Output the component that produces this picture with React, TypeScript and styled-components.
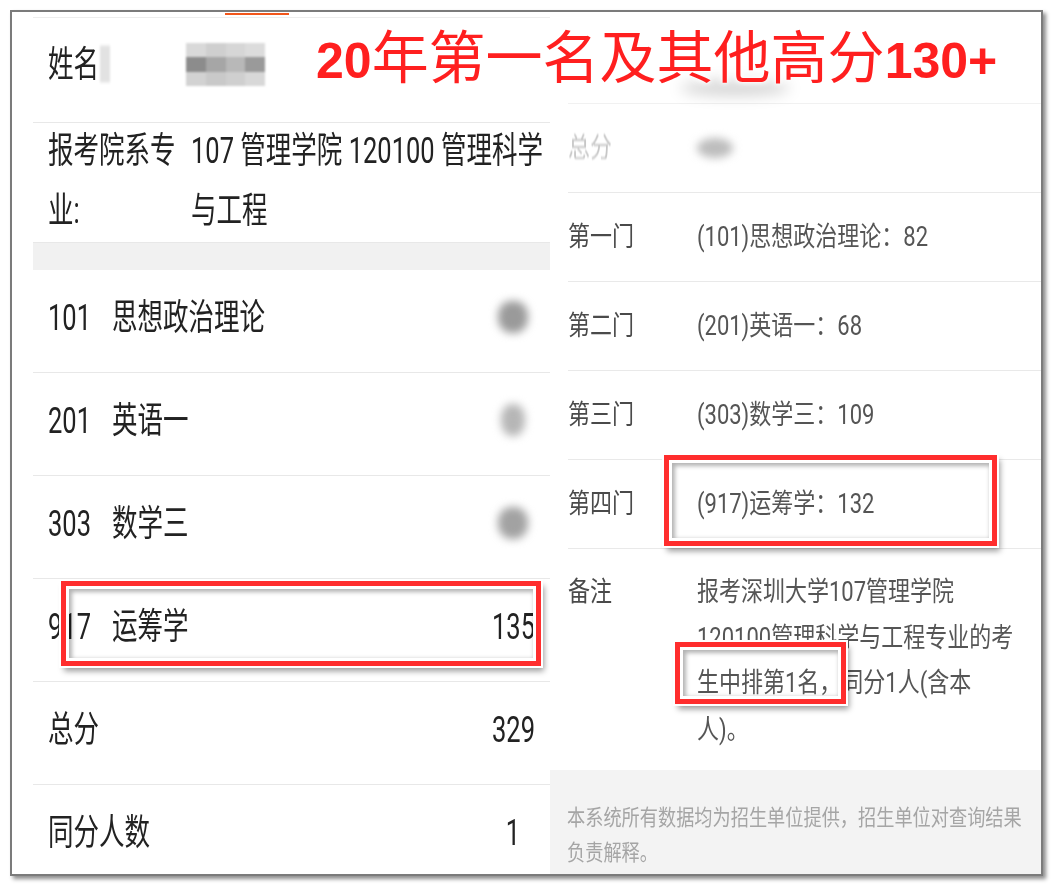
import React from "react"
import styled, { createGlobalStyle } from "styled-components"

const GlobalStyle = createGlobalStyle`
  html, body {
    margin: 0;
    padding: 0;
    background: #fff;
  }
  body {
    font-family: Roboto, "Noto Sans CJK SC", sans-serif;
  }
`

const Page = styled.div`
  position: relative;
  width: 1056px;
  height: 889px;
  padding: 10px 0 0 10px;
  box-sizing: border-box;
  overflow: hidden;
`

const Frame = styled.div`
  display: flex;
  width: 1033px;
  height: 866px;
  box-sizing: border-box;
  border: 2px solid #7b7b7b;
  box-shadow: 3px 3px 4px rgba(0, 0, 0, 0.45);
  background: #fff;
  overflow: hidden;
`

/* ---------- left screenshot ---------- */

const LeftPanel = styled.div`
  display: flex;
  flex-direction: column;
  width: 538px;
  flex-shrink: 0;
  padding-left: 21px;
  box-sizing: border-box;
  color: #222;
  font-size: 25.5px;
  overflow: hidden;
`

const TabBar = styled.div`
  height: 6px;
  flex-shrink: 0;
  padding-top: 1px;
  box-sizing: border-box;
  border-bottom: 1px solid #ededed;
`

const TabMark = styled.div`
  width: 64px;
  height: 2px;
  margin-left: 192px;
  background: #f2561a;
`

const LRow = styled.div<{ $h: number; $pb: number }>`
  position: relative;
  display: flex;
  align-items: center;
  flex-shrink: 0;
  height: ${p => p.$h}px;
  padding: 0 16px ${p => p.$pb}px 15px;
  box-sizing: border-box;
  border-bottom: 1px solid #e8e8e8;
`

const Band = styled.div`
  height: 27px;
  flex-shrink: 0;
  background: #f1f1f1;
`

const LText = styled.span`
  display: inline-block;
  flex-shrink: 0;
  line-height: 42px;
  white-space: nowrap;
  transform: scaleY(1.42);
`

const FieldName = styled(LText)`
  width: 141px;
  white-space: normal;
`

const FieldValue = styled(LText)`
  width: 364px;
  margin-left: 2px;
  white-space: normal;
`

const Code = styled(LText)`
  width: 64px;
`

const Score = styled(LText)`
  width: 42px;
  margin-left: auto;
  text-align: center;
`

const NameSmudge = styled.span`
  display: inline-block;
  width: 10px;
  height: 26px;
  margin-left: 1px;
  vertical-align: -4px;
  background: #e2e2e2;
  filter: blur(1px);
`

const Mosaic = styled.div`
  display: grid;
  grid-template-columns: repeat(4, 1fr);
  grid-template-rows: 14px 15px 14px;
  width: 79px;
  margin-left: -3px;
  filter: blur(1.3px);
`

const Cell = styled.div<{ $c: string }>`
  background: ${p => p.$c};
`

const Blob = styled.div<{ $tone: string; $w: number }>`
  width: ${p => p.$w}px;
  height: 32px;
  margin: 0 ${p => (42 - p.$w) / 2}px 0 auto;
  border-radius: 45%;
  background: ${p => p.$tone};
  filter: blur(4px);
`

/* ---------- right screenshot ---------- */

const RightPanel = styled.div`
  display: flex;
  flex-direction: column;
  flex: 1;
  min-width: 0;
  color: #555;
  font-size: 22px;
`

const RTop = styled.div`
  height: 92px;
  flex-shrink: 0;
  margin-left: 18px;
  box-sizing: border-box;
  border-bottom: 1px solid #f1f1f1;
`

const RRow = styled.div`
  position: relative;
  display: flex;
  align-items: center;
  flex-shrink: 0;
  height: 89px;
  margin-left: 18px;
  box-sizing: border-box;
  border-bottom: 1px solid #e9e9e9;
`

const RemarkRow = styled.div`
  position: relative;
  display: flex;
  align-items: flex-start;
  flex-shrink: 0;
  height: 221px;
  margin-left: 18px;
  padding-top: 20px;
  box-sizing: border-box;
`

const RText = styled.span<{ $faded?: boolean }>`
  display: inline-block;
  line-height: 37.5px;
  transform: scaleY(1.22);
  color: ${p => (p.$faded ? "#c6c6c6" : "inherit")};
  filter: ${p => (p.$faded ? "blur(0.7px)" : "none")};
`

const RLabel = styled(RText)`
  width: 129px;
  flex-shrink: 0;
  color: ${p => (p.$faded ? "#c6c6c6" : "#4a4a4a")};
`

const RemarkLabel = styled(RLabel)`
  transform-origin: top;
`

const RemarkText = styled(RText)`
  width: 320px;
  transform-origin: top;
`

const SoftBlob = styled.div`
  width: 36px;
  height: 20px;
  border-radius: 50%;
  background: #bdbdbd;
  filter: blur(4px);
`

const Footer = styled.div`
  flex: 1;
  padding: 30px 17px 0 17px;
  box-sizing: border-box;
  background: #f3f3f3;
  color: #a5a5a5;
  font-size: 18.2px;
`

const FooterText = styled.p`
  margin: 0;
  line-height: 29.2px;
  transform: scaleY(1.2);
  transform-origin: top;
`

/* ---------- annotations ---------- */

const Highlight = styled.div<{ $x: number; $y: number; $w: number; $h: number }>`
  position: absolute;
  left: ${p => p.$x}px;
  top: ${p => p.$y}px;
  width: ${p => p.$w}px;
  height: ${p => p.$h}px;
  box-sizing: border-box;
  border: 5px solid #ff2d2d;
  box-shadow:
    0 0 0 2px #fff,
    3px 5px 6px rgba(0, 0, 0, 0.4),
    inset 0 0 0 3px #fff,
    inset 2px 2px 4px 4px rgba(0, 0, 0, 0.3);
  pointer-events: none;
`

const Smudge = styled.div`
  position: absolute;
  left: 680px;
  top: 80px;
  width: 110px;
  height: 16px;
  border-radius: 50%;
  background: rgba(0, 0, 0, 0.16);
  filter: blur(7px);
`

const Headline = styled.div`
  position: absolute;
  left: 316px;
  top: 25px;
  color: #ff1f1f;
  font-family: "Noto Sans CJK SC", sans-serif;
  font-size: 57px;
  line-height: 57px;
  white-space: nowrap;
  text-shadow: 0 0 2px #fff, 0 0 5px #fff, 0 0 9px #fff;
`

const HeadNum = styled.span`
  font-family: "Liberation Sans", Arial, sans-serif;
  font-weight: 700;
  font-size: 50px;
`

const mosaic = [
  "#d9d9d9", "#cfcfcf", "#d6d6d6", "#dcdcdc",
  "#8c8c8c", "#a6a6a6", "#b8b8b8", "#9a9a9a",
  "#d2d2d2", "#c9c9c9", "#cfcfcf", "#d8d8d8",
]

const subjects = [
  { code: "101", name: "思想政治理论", tone: "#9a9a9a", w: 30 },
  { code: "201", name: "英语一", tone: "#b6b6b6", w: 24 },
  { code: "303", name: "数学三", tone: "#a2a2a2", w: 30 },
]

const courses = [
  { label: "第一门", value: "(101)思想政治理论：82" },
  { label: "第二门", value: "(201)英语一：68" },
  { label: "第三门", value: "(303)数学三：109" },
]

export default function App() {
  return (
    <Page>
      <GlobalStyle />
      <Frame>
        <LeftPanel>
          <TabBar>
            <TabMark />
          </TabBar>
          <LRow $h={105} $pb={12}>
            <FieldName>
              姓名<NameSmudge />
            </FieldName>
            <Mosaic>
              {mosaic.map((c, i) => (
                <Cell key={i} $c={c} />
              ))}
            </Mosaic>
          </LRow>
          <LRow $h={120} $pb={6}>
            <FieldName>报考院系专业:</FieldName>
            <FieldValue>107 管理学院 120100 管理科学与工程</FieldValue>
          </LRow>
          <Band />
          {subjects.map(s => (
            <LRow key={s.code} $h={103} $pb={8}>
              <Code>{s.code}</Code>
              <LText>{s.name}</LText>
              <Blob $tone={s.tone} $w={s.w} />
            </LRow>
          ))}
          <LRow $h={103} $pb={8}>
            <Code>917</Code>
            <LText>运筹学</LText>
            <Score>135</Score>
            <Highlight $x={28} $y={2} $w={480} $h={85} />
          </LRow>
          <LRow $h={103} $pb={8}>
            <LText>总分</LText>
            <Score>329</Score>
          </LRow>
          <LRow $h={103} $pb={8}>
            <LText>同分人数</LText>
            <Score>1</Score>
          </LRow>
        </LeftPanel>

        <RightPanel>
          <RTop />
          <RRow>
            <RLabel $faded>总分</RLabel>
            <SoftBlob />
          </RRow>
          {courses.map(c => (
            <RRow key={c.label}>
              <RLabel>{c.label}</RLabel>
              <RText>{c.value}</RText>
            </RRow>
          ))}
          <RRow>
            <RLabel>第四门</RLabel>
            <RText>(917)运筹学：132</RText>
            <Highlight $x={96} $y={-5} $w={333} $h={91} />
          </RRow>
          <RemarkRow>
            <RemarkLabel>备注</RemarkLabel>
            <RemarkText>
              报考深圳大学107管理学院120100管理科学与工程专业的考生中排第1名，同分1人(含本人)。
            </RemarkText>
            <Highlight $x={107} $y={93} $w={171} $h={62} />
          </RemarkRow>
          <Footer>
            <FooterText>本系统所有数据均为招生单位提供，招生单位对查询结果负责解释。</FooterText>
          </Footer>
        </RightPanel>
      </Frame>

      <Smudge />
      <Headline>
        <HeadNum>20</HeadNum>年第一名及其他高分<HeadNum>130+</HeadNum>
      </Headline>
    </Page>
  )
}
